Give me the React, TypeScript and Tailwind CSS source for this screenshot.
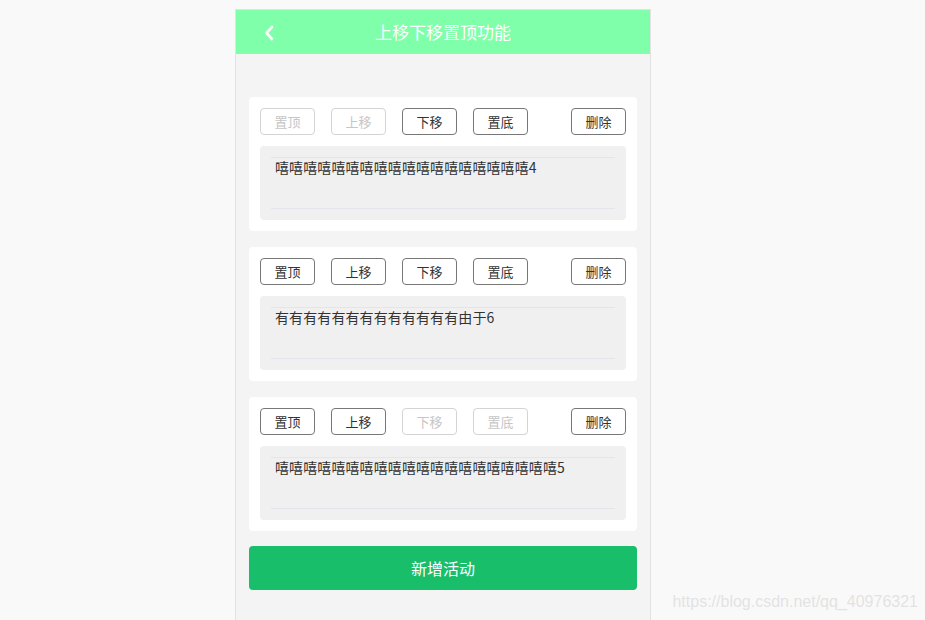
import React from "react";

type Item = { text: string };

const items: Item[] = [
  { text: "嘻".repeat(18) + "4" },
  { text: "有".repeat(13) + "由于6" },
  { text: "嘻".repeat(20) + "5" },
];

function Btn({ label, disabled }: { label: string; disabled?: boolean }) {
  return (
    <button
      className={
        disabled
          ? "w-[55px] h-[27px] rounded-[4px] border border-[#d4d4d4] text-[13px] leading-[25px] text-[#c6c6c6] bg-white"
          : "w-[55px] h-[27px] rounded-[4px] border border-[#777777] text-[13px] leading-[25px] text-[#333333] bg-white"
      }
    >
      {label}
    </button>
  );
}

export default function App() {
  const font = { fontFamily: '"Noto Sans CJK SC", "Liberation Sans", sans-serif' };
  return (
    <div className="relative w-[925px] h-[620px] overflow-hidden bg-[#f9f9f9]" style={font}>
      <div className="ml-[235px] mt-[9px] w-[416px] h-[611px] border-x border-t border-[#e2e2e2] bg-[#f4f4f4] flex flex-col">
        <div className="h-[44px] bg-[#80ffaa] flex items-center relative">
          <div className="absolute left-[28px] top-[15px]">
            <svg width="10" height="16" viewBox="0 0 10 16">
              <path d="M8 2 L2.5 8 L8 14" fill="none" stroke="#ffffff" strokeWidth="2.6" strokeLinecap="round" strokeLinejoin="round" />
            </svg>
          </div>
          <div className="flex-1 text-center text-white text-[17px] leading-[44px]">上移下移置顶功能</div>
        </div>
        <div className="px-[13px] pt-[43px] flex flex-col gap-[16px]">
          {items.map((it, i) => (
            <div key={i} className="bg-white rounded-[4px] p-[11px]">
              <div className="flex gap-[16px]">
                <Btn label="置顶" disabled={i === 0} />
                <Btn label="上移" disabled={i === 0} />
                <Btn label="下移" disabled={i === items.length - 1} />
                <Btn label="置底" disabled={i === items.length - 1} />
                <div className="ml-auto">
                  <Btn label="删除" />
                </div>
              </div>
              <div className="mt-[11px] h-[74px] bg-[#f0f0f0] rounded-[4px] pt-[11px] px-[11px]">
                <div className="h-[52px] border-y border-[#e4e4ec] pl-[4px] text-[14px] leading-[18px] tracking-[0.1px] text-[#333333] whitespace-nowrap">
                  {it.text}
                </div>
              </div>
            </div>
          ))}
        </div>
        <div className="px-[13px] mt-[15px]">
          <button className="w-full h-[44px] rounded-[4px] bg-[#19be6b] text-white text-[16px] leading-[42px]">新增活动</button>
        </div>
      </div>
      <div
        className="absolute right-[7px] bottom-[8px] text-[16px] leading-[20px] text-[#e2e2e2]"
        style={{ fontFamily: '"Liberation Sans", Arial, sans-serif', textShadow: "0 0 1px #ffffff" }}
      >
        https://blog.csdn.net/qq_40976321
      </div>
    </div>
  );
}
